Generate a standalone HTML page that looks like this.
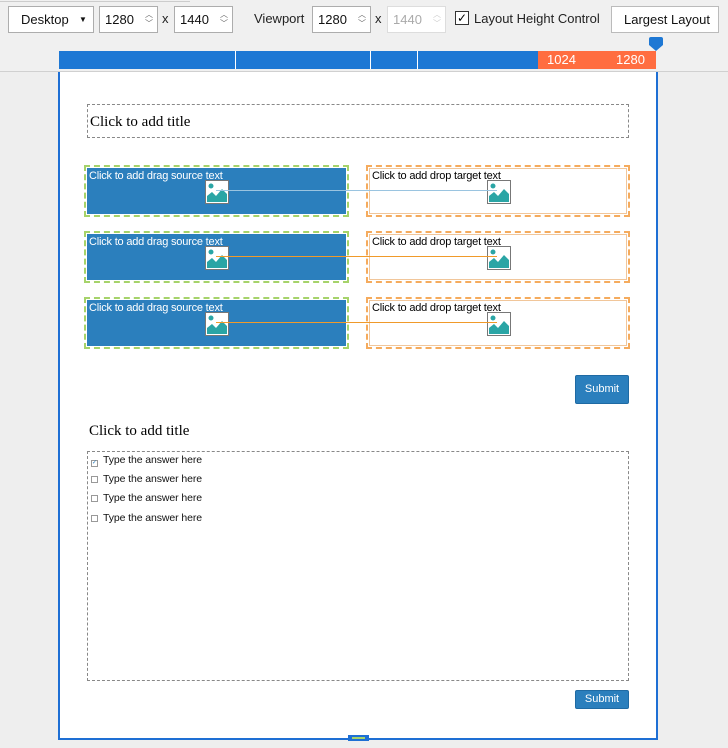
<!DOCTYPE html>
<html><head><meta charset="utf-8"><style>
*{box-sizing:border-box;margin:0;padding:0}
body{width:728px;height:748px;background:#eeeeee;position:relative;overflow:hidden;font-family:"Liberation Sans",sans-serif}
.a{position:absolute}
.tb{font-size:13px;color:#222;}
.box{position:absolute;background:#fff;border:1px solid #adadad;font-size:13px;line-height:24px;padding-left:6px;color:#111}
.spin{position:absolute;right:4px;top:3px;font-size:8px;line-height:9px;color:#666}
.src{position:absolute;border:2px dashed #a6d36a}
.src .in{position:absolute;left:1px;top:1px;right:1px;bottom:1px;background:#2b7fbd;color:#fff;font-size:11px;padding:2px 2px;line-height:12px;letter-spacing:-0.2px}
.tgt{position:absolute;border:2px dashed #f5ab5d}
.tgt .in{position:absolute;left:1px;top:1px;right:1px;bottom:1px;background:#fff;border:1px solid #f1c69a;color:#000;font-size:11px;padding:1px 2px;line-height:12px;letter-spacing:-0.2px}
.sub{position:absolute;background:#2b7fbd;color:#fff;font-size:11px;text-align:center;border-radius:2px;border:1px solid #1f6aa3}
.cb{position:absolute;font-size:10.5px;color:#111;line-height:12px;letter-spacing:-0.1px}
.cb i{display:inline-block;width:7px;height:7px;border:1px solid #999;margin:0 5px 0 4px;vertical-align:-1px;font-size:6px;line-height:5px;color:#2b7fbd;font-style:normal;text-align:center}
</style></head><body>
<div class="a" style="left:0;top:0;width:728px;height:72px;background:#f0f0f0;border-bottom:1px solid #d0d0d0"></div>
<div class="a" style="left:0;top:0;width:190px;height:2px;border-bottom:1px solid #ccc"></div>
<div class="box" style="left:8px;top:6px;width:86px;height:27px;line-height:25px;padding-left:12px">Desktop<span style="position:absolute;left:70px;font-size:8px">▼</span></div>
<div class="box" style="left:99px;top:6px;width:59px;height:27px;padding-left:5px;line-height:25px">1280<div class="spin">︿<br>﹀</div></div>
<div class="a tb" style="left:162px;top:11px">x</div>
<div class="box" style="left:174px;top:6px;width:59px;height:27px;padding-left:5px;line-height:25px">1440<div class="spin">︿<br>﹀</div></div>
<div class="a tb" style="left:254px;top:11px">Viewport</div>
<div class="box" style="left:312px;top:6px;width:59px;height:27px;padding-left:5px;line-height:25px">1280<div class="spin">︿<br>﹀</div></div>
<div class="a tb" style="left:375px;top:11px">x</div>
<div class="box" style="left:387px;top:6px;width:59px;height:27px;padding-left:5px;line-height:25px;color:#aaa;border-color:#ddd">1440<div class="spin" style="color:#ccc">︿<br>﹀</div></div>
<div class="a" style="left:455px;top:11px;width:14px;height:14px;border:1px solid #333;background:#fff;font-size:12px;line-height:12px;text-align:center">✓</div>
<div class="a tb" style="left:474px;top:11px">Layout Height Control</div>
<div class="box" style="left:611px;top:6px;width:108px;height:27px;line-height:25px;padding-left:12px;border-color:#bbb">Largest Layout</div>
<div class="a" style="left:59px;top:51px;width:479px;height:18px;background:#1e78d4"></div>
<div class="a" style="left:538px;top:51px;width:118px;height:18px;background:#ff6d40;color:#fff;font-size:13px;line-height:18px"><span style="position:absolute;left:9px">1024</span><span style="position:absolute;left:78px">1280</span></div>
<div class="a" style="left:235px;top:51px;width:1px;height:18px;background:#fff"></div>
<div class="a" style="left:370px;top:51px;width:1px;height:18px;background:#fff"></div>
<div class="a" style="left:417px;top:51px;width:1px;height:18px;background:#fff"></div>
<div class="a" style="left:649px;top:37px;width:14px;height:8px;background:#1e78d4;border-radius:2px 2px 0 0"></div>
<div class="a" style="left:649px;top:45px;width:0;height:0;border-left:7px solid transparent;border-right:7px solid transparent;border-top:6px solid #1e78d4"></div>
<div class="a" style="left:58px;top:72px;width:600px;height:668px;background:#fff;border:2px solid #1e6fd4;border-top:none"></div>
<div class="a" style="left:348px;top:735px;width:21px;height:6px;background:#1e6fd4"><div style="margin:2px 4px;height:2px;background:#a6d36a"></div></div>

<div class="a" style="left:87px;top:104px;width:542px;height:34px;border:1px dashed #888;font-family:'Liberation Serif',serif;font-size:15px;line-height:35px;padding-left:2px">Click to add title</div>

<div class="src" style="left:84px;top:165px;width:265px;height:52px"><div class="in">Click to add drag source text</div></div>
<div class="tgt" style="left:366px;top:165px;width:264px;height:52px"><div class="in">Click to add drop target text</div></div>
<div class="src" style="left:84px;top:231px;width:265px;height:52px"><div class="in">Click to add drag source text</div></div>
<div class="tgt" style="left:366px;top:231px;width:264px;height:52px"><div class="in">Click to add drop target text</div></div>
<div class="src" style="left:84px;top:297px;width:265px;height:52px"><div class="in">Click to add drag source text</div></div>
<div class="tgt" style="left:366px;top:297px;width:264px;height:52px"><div class="in">Click to add drop target text</div></div>

<svg class="a" style="left:0;top:0" width="728" height="748">
<defs><g id="im"><rect x="0.5" y="0.5" width="23" height="23" fill="#fff" stroke="#777"/><circle cx="6" cy="6" r="2.5" fill="#2aa5a5"/><path d="M2 22 V16 L7 12 L11 16 L17 9 L22 14 V22Z" fill="#2aa5a5"/></g></defs>
<use href="#im" x="205" y="180"/><use href="#im" x="487" y="180"/>
<use href="#im" x="205" y="246"/><use href="#im" x="487" y="246"/>
<use href="#im" x="205" y="312"/><use href="#im" x="487" y="312"/>
<line x1="216" y1="190.5" x2="497" y2="190.5" stroke="#9ac4e0"/>
<line x1="216" y1="256.5" x2="497" y2="256.5" stroke="#f09a2a"/>
<line x1="216" y1="322.5" x2="497" y2="322.5" stroke="#f09a2a"/>
</svg>

<div class="sub" style="left:575px;top:375px;width:54px;height:29px;line-height:27px">Submit</div>
<div class="a" style="left:89px;top:423px;font-family:'Liberation Serif',serif;font-size:15px">Click to add title</div>
<div class="a" style="left:87px;top:451px;width:542px;height:230px;border:1px dashed #888"></div>
<div class="cb" style="left:87px;top:454px"><i>✓</i>Type the answer here</div>
<div class="cb" style="left:87px;top:473px"><i></i>Type the answer here</div>
<div class="cb" style="left:87px;top:492px"><i></i>Type the answer here</div>
<div class="cb" style="left:87px;top:512px"><i></i>Type the answer here</div>
<div class="sub" style="left:575px;top:690px;width:54px;height:19px;line-height:17px">Submit</div>
</body></html>
